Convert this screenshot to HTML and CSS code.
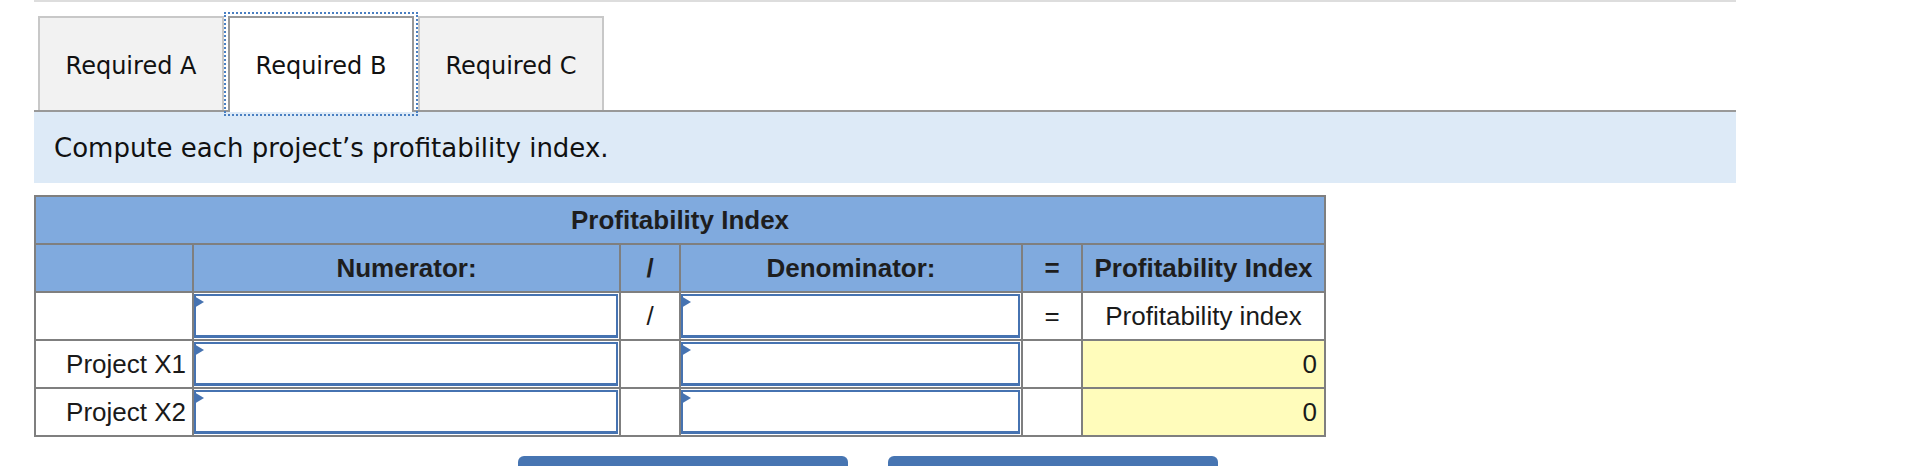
FILE: index.html
```html
<!DOCTYPE html>
<html lang="en">
<head>
<meta charset="utf-8">
<title>Profitability Index</title>
<link rel="stylesheet" href="styles.css">
</head>
<body>
<div class="page">
  <div class="tabbar">
    <div class="tab">Required A</div>
    <div class="tab active">Required B</div>
    <div class="tab">Required C</div>
  </div>
  <div class="instruction">Compute each project’s profitability index.</div>

  <table class="pi-table">
    <colgroup>
      <col class="c-label">
      <col class="c-num">
      <col class="c-op">
      <col class="c-den">
      <col class="c-op">
      <col class="c-res">
    </colgroup>
    <tr class="head">
      <th colspan="6">Profitability Index</th>
    </tr>
    <tr class="head">
      <th></th>
      <th>Numerator:</th>
      <th>/</th>
      <th>Denominator:</th>
      <th>=</th>
      <th>Profitability Index</th>
    </tr>
    <tr>
      <td></td>
      <td class="in"><div class="field"><span class="flag"></span></div></td>
      <td class="op">/</td>
      <td class="in"><div class="field"><span class="flag"></span></div></td>
      <td class="op">=</td>
      <td class="center">Profitability index</td>
    </tr>
    <tr>
      <td class="label">Project X1</td>
      <td class="in"><div class="field"><span class="flag"></span></div></td>
      <td></td>
      <td class="in"><div class="field"><span class="flag"></span></div></td>
      <td></td>
      <td class="result">0</td>
    </tr>
    <tr>
      <td class="label">Project X2</td>
      <td class="in"><div class="field"><span class="flag"></span></div></td>
      <td></td>
      <td class="in"><div class="field"><span class="flag"></span></div></td>
      <td></td>
      <td class="result">0</td>
    </tr>
  </table>

  <div class="nav">
    <div class="nav-btn"></div>
    <div class="nav-btn"></div>
  </div>
</div>
</body>
</html>
```

FILE: styles.css
```css
html, body {
  margin: 0;
  padding: 0;
  background: #ffffff;
}

body {
  font-family: "DejaVu Sans", Verdana, sans-serif;
  color: #111111;
  overflow: hidden;
}

.page {
  margin-left: 34px;
  width: 1702px;
}

.tabbar {
  display: flex;
  align-items: flex-end;
  gap: 4px;
  padding: 14px 0 0 4px;
  border-top: 2px solid #dddddd;
  border-bottom: 2px solid #999999;
}

.tab {
  box-sizing: border-box;
  width: 186px;
  height: 94px;
  display: flex;
  align-items: center;
  justify-content: center;
  padding-top: 4px;
  background: #f2f2f2;
  border: 2px solid #c8c8c8;
  border-bottom: none;
  font-size: 24px;
  color: #111111;
}

.tab.active {
  position: relative;
  height: 96px;
  margin-bottom: -2px;
  padding-bottom: 2px;
  background: #ffffff;
  border-color: #999999;
  outline: 2px dotted #4a7fc1;
  outline-offset: 2px;
}

.instruction {
  box-sizing: border-box;
  height: 71px;
  display: flex;
  align-items: center;
  padding-left: 20px;
  background: #ddeaf7;
  font-size: 26px;
  color: #111111;
}

.pi-table {
  margin-top: 12px;
  border-collapse: collapse;
  table-layout: fixed;
  width: 1290px;
  font-family: "Liberation Sans", Arial, sans-serif;
  font-size: 26px;
  color: #1a1a1a;
}

.c-label { width: 158px; }
.c-num { width: 427px; }
.c-op { width: 60px; }
.c-den { width: 342px; }
.c-res { width: 243px; }

.pi-table th,
.pi-table td {
  border: 2px solid #7f7f7f;
  height: 44px;
  padding: 0;
  box-sizing: border-box;
}

.pi-table tr { height: 48px; }

.pi-table th {
  background: #80aade;
  font-weight: bold;
  text-align: center;
  color: #1e1e1e;
}

.pi-table td.op,
.pi-table td.center {
  text-align: center;
}

.pi-table td.label {
  text-align: right;
  padding-right: 6px;
}

.pi-table td.result {
  background: #fffcbb;
  text-align: right;
  padding-right: 7px;
}

.pi-table td.in {
  padding: 1px 1px 1px 0;
}

.field {
  position: relative;
  box-sizing: border-box;
  height: 44px;
  width: 100%;
  background: #ffffff;
  border: 2px solid #4673b1;
  border-bottom-width: 3px;
}

.flag {
  position: absolute;
  left: -2px;
  top: 0;
  width: 0;
  height: 0;
  border-left: 10px solid #4673b1;
  border-top: 6.5px solid transparent;
  border-bottom: 6.5px solid transparent;
}

.nav {
  display: flex;
  gap: 40px;
  margin-top: 19px;
  padding-left: 484px;
}

.nav-btn {
  width: 330px;
  height: 40px;
  background: #4775b2;
  border-radius: 6px 6px 0 0;
}
```
